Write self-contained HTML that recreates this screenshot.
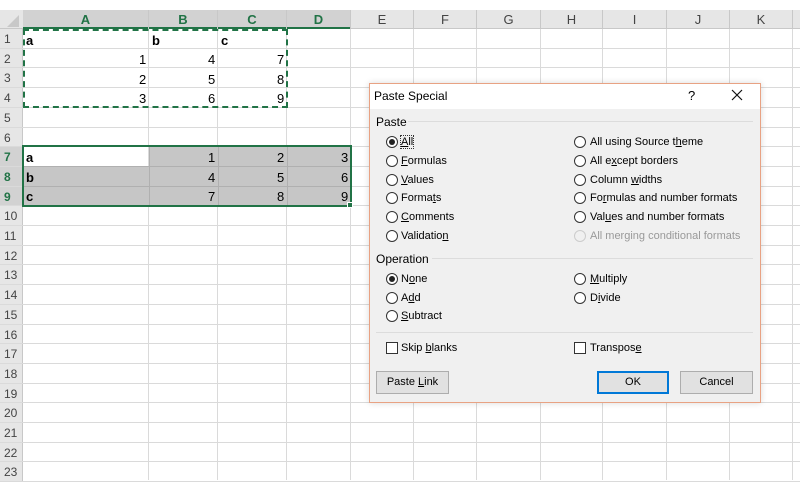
<!DOCTYPE html>
<html><head><style>
body{margin:0;width:800px;height:480px;overflow:hidden;background:#fff;font-family:"Liberation Sans",sans-serif;position:relative}
.a{position:absolute;box-sizing:border-box}
.hl{position:absolute;height:1px;background:#dadada}
.vl{position:absolute;width:1px;background:#dadada}
.ch{position:absolute;top:10px;height:19px;line-height:19px;text-align:center;font-size:13px;color:#444;border-right:1px solid #c8c8c8;box-sizing:border-box}
.rh{position:absolute;left:0;width:23px;font-size:12px;color:#444;padding-left:4px;box-sizing:border-box}
.c{position:absolute;font-size:13px;color:#000}
.dl{position:absolute;font-size:11px;color:#000}
.rad{position:absolute;width:12px;height:12px;border:1px solid #333;border-radius:50%;background:#fff;box-sizing:border-box}
.rad.on::after{content:"";position:absolute;left:2px;top:2px;width:6px;height:6px;border-radius:50%;background:#222}
.chk{position:absolute;width:12px;height:12px;border:1px solid #333;background:#fff;box-sizing:border-box}
.btn{position:absolute;height:23px;border:1px solid #adadad;background:#e1e1e1;font-size:11px;text-align:center;line-height:21px;box-sizing:border-box}
u{text-decoration:underline}
</style></head><body>
<div class="a" style="left:0;top:10px;width:800px;height:19px;background:#e6e6e6;border-bottom:1px solid #c8c8c8"></div>
<div class="a" style="left:23px;top:10px;width:328px;height:19px;background:#d2d2d2;border-bottom:2px solid #217346"></div>
<svg class="a" style="left:6px;top:14px" width="14" height="14"><path d="M13 1 L13 13 L1 13 Z" fill="#c8c8c8"/></svg>
<div id="g"></div>
<script>
(function(){
var cols=[23,149,218,287,351,414,477,541,603,667,730,793,830];
var names="ABCDEFGHIJK";
var h="";
for(var i=0;i<11;i++){var sel=i<4;h+='<div class="ch" style="left:'+cols[i]+'px;width:'+(cols[i+1]-cols[i])+'px;'+(sel?'color:#217346;font-weight:bold;':'')+'">'+names[i]+'</div>';}
var RH=19.7,T=29;
for(var r=1;r<=23;r++){var ty=T+(r-1)*RH;var sel=r>=7&&r<=9;
h+='<div class="a" style="left:0;top:'+ty+'px;width:23px;height:'+RH+'px;background:'+(sel?'#d2d2d2':'#e6e6e6')+';border-right:1px solid #c8c8c8"></div>';
h+='<div class="rh" style="top:'+(ty+3)+'px;'+(sel?'color:#217346;font-weight:bold;':'')+'">'+r+'</div>';
h+='<div class="hl" style="left:0;width:800px;top:'+(ty+RH-1)+'px"></div>';}
for(var i=1;i<12;i++)h+='<div class="vl" style="left:'+(cols[i]-1)+'px;top:29px;height:451px"></div>';
document.getElementById('g').innerHTML=h;
})();
</script>
<div class="a" style="left:149px;top:147px;width:202px;height:19.7px;background:#c6c6c6"></div>
<div class="a" style="left:23px;top:166.4px;width:328px;height:39.4px;background:#c6c6c6"></div>
<div class="a" style="left:149px;top:146px;width:1px;height:60px;background:#b0b0b0"></div>
<div class="a" style="left:218px;top:146px;width:1px;height:60px;background:#b0b0b0"></div>
<div class="a" style="left:287px;top:146px;width:1px;height:60px;background:#b0b0b0"></div>
<div class="a" style="left:23px;top:185.5px;width:328px;height:1px;background:#b0b0b0"></div>
<div class="a" style="left:23px;top:165.5px;width:328px;height:1px;background:#b0b0b0"></div>
<div class="a" style="left:22px;top:145px;width:330px;height:62px;border:2px solid #217346"></div>
<div class="a" style="left:347px;top:202px;width:6px;height:6px;background:#217346;border:1px solid #fff"></div>
<div class="a" style="left:23px;top:29px;width:265px;height:79px;border:2px dashed #217346"></div>
<div class="c" style="left:26px;top:33px;font-weight:bold">a</div>
<div class="c" style="left:152px;top:33px;font-weight:bold">b</div>
<div class="c" style="left:221px;top:33px;font-weight:bold">c</div>
<div class="c" style="left:139px;top:52px">1</div><div class="c" style="left:208px;top:52px">4</div><div class="c" style="left:277px;top:52px">7</div>
<div class="c" style="left:139px;top:72px">2</div><div class="c" style="left:208px;top:72px">5</div><div class="c" style="left:277px;top:72px">8</div>
<div class="c" style="left:139px;top:91px">3</div><div class="c" style="left:208px;top:91px">6</div><div class="c" style="left:277px;top:91px">9</div>
<div class="c" style="left:26px;top:150px;font-weight:bold">a</div>
<div class="c" style="left:26px;top:170px;font-weight:bold">b</div>
<div class="c" style="left:26px;top:189px;font-weight:bold">c</div>
<div class="c" style="left:208px;top:150px">1</div><div class="c" style="left:277px;top:150px">2</div><div class="c" style="left:341px;top:150px">3</div>
<div class="c" style="left:208px;top:170px">4</div><div class="c" style="left:277px;top:170px">5</div><div class="c" style="left:341px;top:170px">6</div>
<div class="c" style="left:208px;top:189px">7</div><div class="c" style="left:277px;top:189px">8</div><div class="c" style="left:341px;top:189px">9</div>

<div class="a" style="left:369px;top:83px;width:392px;height:320px;background:#f0f0f0;border:1px solid #e8a283;box-shadow:0 0 6px rgba(0,0,0,.15)"></div>
<div class="a" style="left:370px;top:84px;width:390px;height:25px;background:#fff"></div>
<div class="dl" style="left:374px;top:89px;font-size:12px">Paste Special</div>
<div class="dl" style="left:688px;top:88px;font-size:13px">?</div>
<svg class="a" style="left:731px;top:89px" width="12" height="12"><path d="M1 1L11 11M11 1L1 11" stroke="#111" stroke-width="1.2"/></svg>
<div class="dl" style="left:376px;top:115px;font-size:12px">Paste</div>
<div class="a" style="left:408px;top:121px;width:345px;height:1px;background:#dcdcdc"></div>
<div class="rad on" style="left:386px;top:136px"></div><div class="dl" style="left:401px;top:136px;outline:1px dotted #333"><u>A</u>ll</div>
<div class="rad" style="left:386px;top:155px"></div><div class="dl" style="left:401px;top:155px"><u>F</u>ormulas</div>
<div class="rad" style="left:386px;top:174px"></div><div class="dl" style="left:401px;top:174px"><u>V</u>alues</div>
<div class="rad" style="left:386px;top:192px"></div><div class="dl" style="left:401px;top:192px">Forma<u>t</u>s</div>
<div class="rad" style="left:386px;top:211px"></div><div class="dl" style="left:401px;top:211px"><u>C</u>omments</div>
<div class="rad" style="left:386px;top:230px"></div><div class="dl" style="left:401px;top:230px">Validatio<u>n</u></div>
<div class="rad" style="left:574px;top:136px"></div><div class="dl" style="left:590px;top:136px">All using Source t<u>h</u>eme</div>
<div class="rad" style="left:574px;top:155px"></div><div class="dl" style="left:590px;top:155px">All e<u>x</u>cept borders</div>
<div class="rad" style="left:574px;top:174px"></div><div class="dl" style="left:590px;top:174px">Column <u>w</u>idths</div>
<div class="rad" style="left:574px;top:192px"></div><div class="dl" style="left:590px;top:192px">Fo<u>r</u>mulas and number formats</div>
<div class="rad" style="left:574px;top:211px"></div><div class="dl" style="left:590px;top:211px">Val<u>u</u>es and number formats</div>
<div class="rad" style="left:574px;top:230px;border-color:#ccc;background:#f0f0f0"></div><div class="dl" style="left:590px;top:230px;color:#999">All merging conditional formats</div>
<div class="dl" style="left:376px;top:252px;font-size:12px">Operation</div>
<div class="a" style="left:432px;top:258px;width:321px;height:1px;background:#dcdcdc"></div>
<div class="rad on" style="left:386px;top:273px"></div><div class="dl" style="left:401px;top:273px">N<u>o</u>ne</div>
<div class="rad" style="left:386px;top:292px"></div><div class="dl" style="left:401px;top:292px">A<u>d</u>d</div>
<div class="rad" style="left:386px;top:310px"></div><div class="dl" style="left:401px;top:310px"><u>S</u>ubtract</div>
<div class="rad" style="left:574px;top:273px"></div><div class="dl" style="left:590px;top:273px"><u>M</u>ultiply</div>
<div class="rad" style="left:574px;top:292px"></div><div class="dl" style="left:590px;top:292px">D<u>i</u>vide</div>
<div class="a" style="left:376px;top:332px;width:377px;height:1px;background:#dcdcdc"></div>
<div class="chk" style="left:386px;top:342px"></div><div class="dl" style="left:401px;top:342px">Skip <u>b</u>lanks</div>
<div class="chk" style="left:574px;top:342px"></div><div class="dl" style="left:590px;top:342px">Transpos<u>e</u></div>
<div class="btn" style="left:376px;top:371px;width:73px">Paste <u>L</u>ink</div>
<div class="btn" style="left:597px;top:371px;width:72px;border:2px solid #0078d7;line-height:19px">OK</div>
<div class="btn" style="left:680px;top:371px;width:73px">Cancel</div>
</body></html>
